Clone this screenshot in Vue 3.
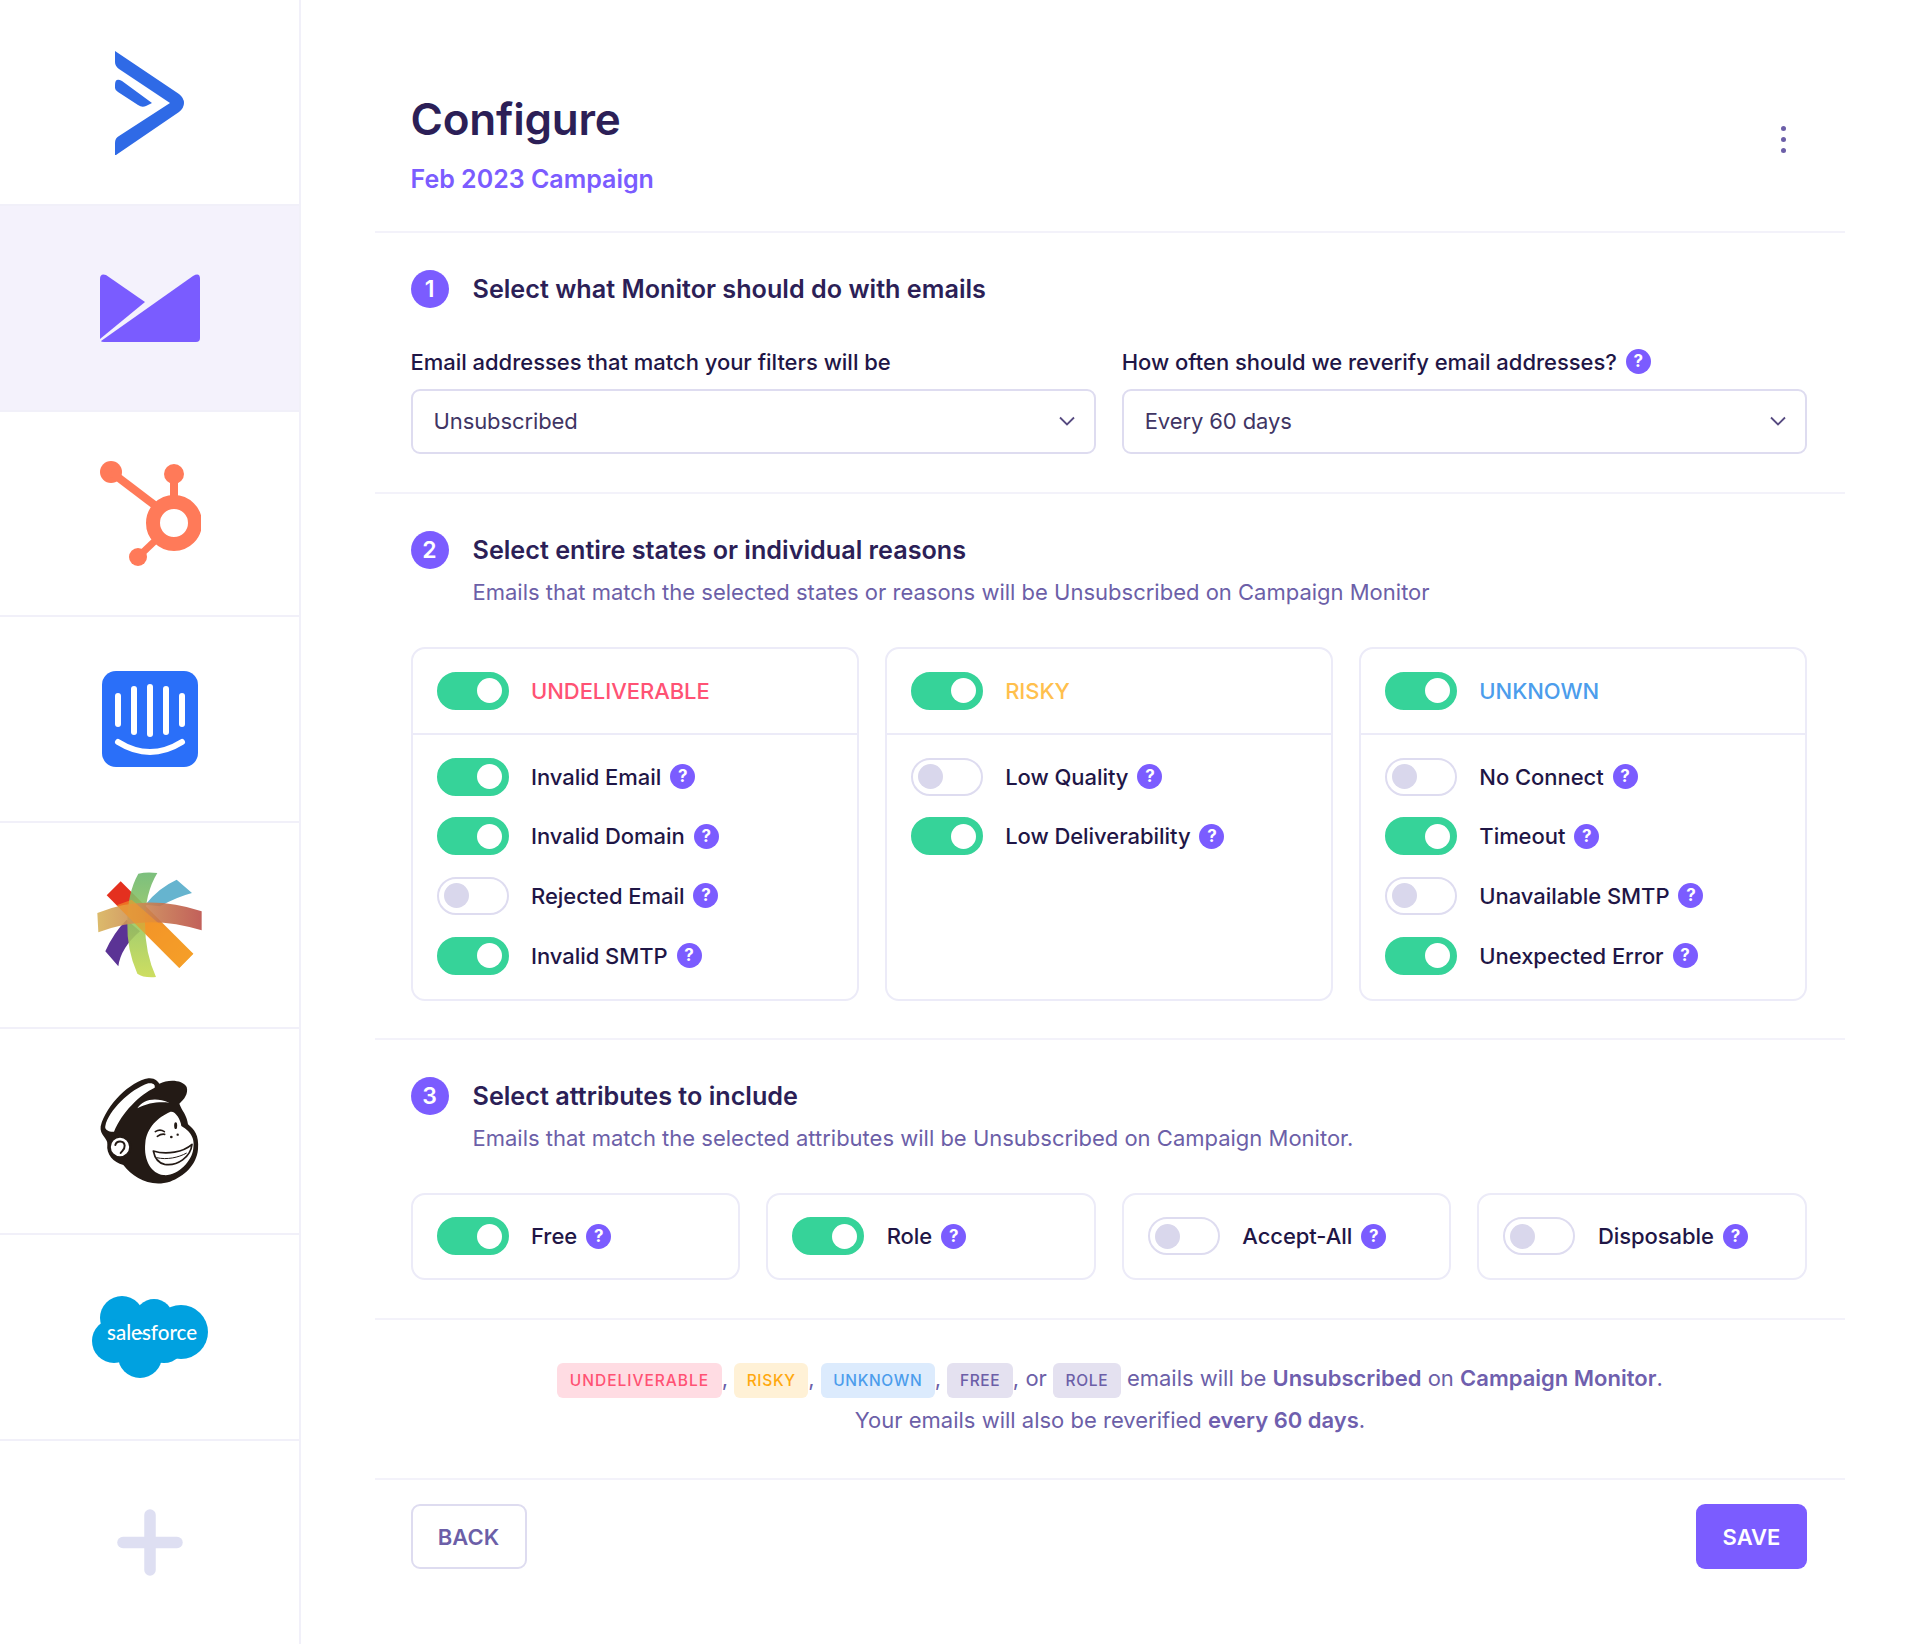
<script setup>
const groups = [
  { title: 'UNDELIVERABLE', cls: 'red', on: true, items: [
    { name: 'Invalid Email', on: true }, { name: 'Invalid Domain', on: true },
    { name: 'Rejected Email', on: false }, { name: 'Invalid SMTP', on: true } ] },
  { title: 'RISKY', cls: 'amber', on: true, items: [
    { name: 'Low Quality', on: false }, { name: 'Low Deliverability', on: true } ] },
  { title: 'UNKNOWN', cls: 'blue', on: true, items: [
    { name: 'No Connect', on: false }, { name: 'Timeout', on: true },
    { name: 'Unavailable SMTP', on: false }, { name: 'Unexpected Error', on: true } ] },
]
const attrs = [
  { name: 'Free', on: true }, { name: 'Role', on: true },
  { name: 'Accept-All', on: false }, { name: 'Disposable', on: false },
]
</script>

<template>
  <div class="app">
    <aside class="side">
      <div class="logo first">
        <svg width="70" height="104" viewBox="116 51 70 104">
          <path fill="#2f6ae6" d="M116 51 L180 94 Q185 98 185 103 Q185 108 180 112 L117 155 L116 155 L116 143 Q116 138 120 136 L171 103 L120 69 Q116 66 116 62Z"/>
          <path fill="#2f6ae6" d="M116 85 Q116 77 123 81 L153 103 L147 106 Q143 108 139 105 L119 92 Q116 90 116 88Z"/>
        </svg>
      </div>
      <div class="logo active">
        <svg width="100" height="68" viewBox="100 274 100 68">
          <path fill="#7a5cff" d="M100 279 Q100 273 106 275 L145 302 L100 339Z"/>
          <path fill="#7a5cff" d="M101 341 L193 276 Q200 272 200 279 V338 Q200 342 196 342 H104 Q101 342 101 341Z"/>
        </svg>
      </div>
      <div class="logo hub">
        <svg width="102" height="106" viewBox="98 461 102 106">
          <g fill="#ff7a59" stroke="#ff7a59">
            <circle cx="110" cy="472" r="11" stroke="none"/>
            <circle cx="173" cy="474" r="10" stroke="none"/>
            <circle cx="137" cy="557" r="9" stroke="none"/>
            <line x1="110" y1="472" x2="160" y2="510" stroke-width="8"/>
            <line x1="173" y1="474" x2="173" y2="505" stroke-width="8"/>
            <line x1="137" y1="557" x2="158" y2="537" stroke-width="7"/>
            <circle cx="173" cy="523" r="21" fill="none" stroke-width="14"/>
          </g>
        </svg>
      </div>
      <div class="logo">
        <svg width="96" height="96" viewBox="102 671 96 96">
          <rect x="102" y="671" width="96" height="96" rx="14" fill="#2a6ff9"/>
          <g stroke="#fff" stroke-width="6" stroke-linecap="round" fill="none">
            <line x1="118" y1="696" x2="118" y2="724"/>
            <line x1="134" y1="689" x2="134" y2="732"/>
            <line x1="150" y1="687" x2="150" y2="734"/>
            <line x1="166" y1="689" x2="166" y2="732"/>
            <line x1="182" y1="696" x2="182" y2="724"/>
            <path d="M118 742 Q150 762 182 742"/>
          </g>
        </svg>
      </div>
      <div class="logo">
        <svg width="140" height="140" viewBox="0 16 420 420">
          <defs>
            <linearGradient id="gGreen" x1="0" y1="0" x2="0" y2="1">
              <stop offset="0" stop-color="#6db86f"/><stop offset="1" stop-color="#c8da4f"/>
            </linearGradient>
            <linearGradient id="gTan" x1="0" y1="0" x2="1" y2="0">
              <stop offset="0" stop-color="#d8b35b"/><stop offset="1" stop-color="#bb4f48"/>
            </linearGradient>
            <linearGradient id="gDiag" x1="0" y1="0" x2="1" y2="1">
              <stop offset="0" stop-color="#e4301f"/><stop offset="0.24" stop-color="#e4301f"/><stop offset="0.38" stop-color="#f08a2a"/><stop offset="1" stop-color="#f5aa28"/>
            </linearGradient>
          </defs>
          <path fill="#5b3395" d="M140 210 Q100 250 76 305 L115 350 Q122 295 180 245Z"/>
          <path fill="#66b4cf" d="M196 165 Q235 115 290 90 L336 130 Q290 142 240 170Z"/>
          <path fill="url(#gDiag)" d="M122 95 L340 312 L298 355 L80 137Z"/>
          <path fill="url(#gGreen)" opacity="0.9" d="M175 72 Q200 66 232 70 Q195 130 195 220 Q195 310 228 382 Q190 385 172 372 Q140 300 142 220 Q142 130 175 72Z"/>
          <path fill="url(#gTan)" opacity="0.9" d="M52 190 Q200 130 365 185 L365 242 Q200 190 55 248Z"/>
          <path fill="#f59a28" opacity="0.6" d="M155 150 L340 312 L298 355 L110 167Z"/>
        </svg>
      </div>
      <div class="logo">
        <svg width="140" height="140" viewBox="0 0 420 420">
          <path fill="#231a15" d="M62 196 C80 130 150 62 205 52 C225 50 234 62 238 68 C265 54 308 56 320 78 C326 98 312 116 298 128 C306 150 320 160 324 190 C342 205 358 222 354 265 C350 312 312 347 270 362 C210 380 160 350 130 312 C100 305 78 280 82 250 C84 232 58 222 62 196Z"/>
          <path fill="#fff" d="M76 195 C85 150 150 85 205 67 C222 65 226 73 224 80 C180 100 125 155 102 212 C92 214 72 208 76 195Z"/>
          <path fill="#fff" d="M172 142 C190 115 225 108 268 125 C235 122 205 125 172 142Z"/>
          <circle cx="120" cy="258" r="31" fill="#fff" stroke="#231a15" stroke-width="7"/>
          <path fill="none" stroke="#231a15" stroke-width="6" stroke-linecap="round" d="M106 252 C110 238 132 238 134 254 C135 266 126 270 122 276"/>
          <path fill="#fff" d="M196 245 C200 200 235 168 270 153 C285 148 302 175 304 195 C322 205 347 225 340 262 C337 302 290 347 250 342 C215 337 190 300 196 245Z"/>
          <path fill="none" stroke="#231a15" stroke-width="5" stroke-linecap="round" d="M226 212 Q240 203 253 212 M232 226 Q244 218 254 220"/>
          <ellipse cx="287" cy="194" rx="4.5" ry="10" fill="#231a15"/>
          <circle cx="274" cy="228" r="4" fill="#231a15"/>
          <circle cx="293" cy="221" r="3.5" fill="#231a15"/>
          <path fill="#fff" stroke="#231a15" stroke-width="5" stroke-linejoin="round" d="M220 270 C260 283 310 273 336 250 C332 288 292 316 254 310 C234 306 224 290 220 270Z"/>
          <path fill="none" stroke="#231a15" stroke-width="3" d="M230 290 C260 297 295 290 320 276"/>
        </svg>
      </div>
      <div class="logo">
        <svg width="116" height="82" viewBox="0 0 116 82">
          <g fill="#00a1e0">
            <circle cx="30" cy="22" r="22"/><circle cx="62" cy="22" r="19"/>
            <circle cx="89" cy="36" r="27"/><circle cx="22" cy="45" r="22"/>
            <circle cx="48" cy="60" r="22"/><circle cx="72" cy="46" r="21"/>
          </g>
          <text x="60" y="44" text-anchor="middle" class="sf">salesforce</text>
        </svg>
      </div>
      <div class="logo last">
        <svg width="66" height="67" viewBox="0 0 66 67">
          <g stroke="#dedff2" stroke-width="11.5" stroke-linecap="round">
            <line x1="6" y1="33.5" x2="60" y2="33.5"/><line x1="33" y1="6" x2="33" y2="61"/>
          </g>
        </svg>
      </div>
    </aside>

    <main class="main">
      <header class="head">
        <div>
          <h1 class="title">Configure</h1>
          <div class="subtitle">Feb 2023 Campaign</div>
        </div>
        <div class="dots"><i></i><i></i><i></i></div>
      </header>

      <section class="sec sec1">
        <div class="sec-head">
          <span class="num">1</span>
          <div><h2 class="sec-title">Select what Monitor should do with emails</h2></div>
        </div>
        <div class="fields">
          <div>
            <div class="label">Email addresses that match your filters will be</div>
            <div class="select">
              <span>Unsubscribed</span>
              <svg width="16" height="10" viewBox="0 0 16 10"><path d="M1 1.5 L8 8.5 L15 1.5" fill="none" stroke="#564a80" stroke-width="1.8"/></svg>
            </div>
          </div>
          <div>
            <div class="label">How often should we reverify email addresses? <span class="help">?</span></div>
            <div class="select">
              <span>Every 60 days</span>
              <svg width="16" height="10" viewBox="0 0 16 10"><path d="M1 1.5 L8 8.5 L15 1.5" fill="none" stroke="#564a80" stroke-width="1.8"/></svg>
            </div>
          </div>
        </div>
      </section>

      <section class="sec sec2">
        <div class="sec-head">
          <span class="num">2</span>
          <div>
            <h2 class="sec-title">Select entire states or individual reasons</h2>
            <p class="sec-sub">Emails that match the selected states or reasons will be Unsubscribed on Campaign Monitor</p>
          </div>
        </div>
        <div class="groups">
          <div v-for="g in groups" :key="g.title" class="group">
            <div class="group-head">
              <span class="toggle on"><i></i></span>
              <span class="group-title" :class="g.cls">{{ g.title }}</span>
            </div>
            <div class="group-body">
              <div v-for="it in g.items" :key="it.name" class="row">
                <span class="toggle" :class="{ on: it.on }"><i></i></span>
                <span class="row-name">{{ it.name }}</span>
                <span class="help">?</span>
              </div>
            </div>
          </div>
        </div>
      </section>

      <section class="sec sec3">
        <div class="sec-head">
          <span class="num">3</span>
          <div>
            <h2 class="sec-title">Select attributes to include</h2>
            <p class="sec-sub">Emails that match the selected attributes will be Unsubscribed on Campaign Monitor.</p>
          </div>
        </div>
        <div class="attrs">
          <div v-for="a in attrs" :key="a.name" class="attr row">
            <span class="toggle" :class="{ on: a.on }"><i></i></span>
            <span class="row-name">{{ a.name }}</span>
            <span class="help">?</span>
          </div>
        </div>
      </section>

      <section class="summary">
        <div>
          <span class="tag t-red">UNDELIVERABLE</span>, <span class="tag t-amber">RISKY</span>, <span class="tag t-blue">UNKNOWN</span>, <span class="tag t-gray">FREE</span>, or <span class="tag t-gray">ROLE</span> emails will be <b>Unsubscribed</b> on <b>Campaign Monitor</b>.
        </div>
        <div>Your emails will also be reverified <b>every 60 days</b>.</div>
      </section>

      <footer class="foot">
        <button class="btn back">BACK</button>
        <button class="btn save">SAVE</button>
      </footer>
    </main>
  </div>
</template>

<style scoped>
.app {
  display: flex;
  min-height: 1644px;
  background: #fff;
  font-family: Inter, "Liberation Sans", sans-serif;
  color: #1f1646;
}
.side {
  width: 301px;
  flex: none;
  box-sizing: border-box;
  border-right: 2px solid #f1f0f9;
  display: flex;
  flex-direction: column;
}
.logo {
  height: 205.8px;
  flex: none;
  box-sizing: border-box;
  border-bottom: 2px solid #f1f0f9;
  display: flex;
  align-items: center;
  justify-content: center;
}
.logo.first { padding-top: 2px; }
.logo.hub { padding-top: 2px; }
.logo.active { background: #f4f2fc; }
.logo.last { border-bottom: 0; flex: 1; }
.logo svg { display: block; }
.sf { font: 500 20.5px Lato, Inter, sans-serif; fill: #fff; }

.main {
  flex: 1;
  min-width: 0;
  padding: 0 75px 0 74px;
}
.head {
  height: 233px;
  box-sizing: border-box;
  border-bottom: 2px solid #f3f2fa;
  padding: 90px 38px 0 35.5px;
  display: flex;
  justify-content: space-between;
  align-items: flex-start;
}
.title {
  margin: 0;
  font-size: 44px;
  line-height: 58px;
  font-weight: 600;
  color: #2c1f57;
  letter-spacing: -0.2px;
}
.subtitle {
  margin-top: 16px;
  font-size: 25px;
  line-height: 30px;
  font-weight: 600;
  color: #7b5cff;
}
.dots {
  margin: 36px 21px 0 0;
  display: flex;
  flex-direction: column;
  gap: 6px;
}
.dots i {
  display: block;
  width: 5px;
  height: 5px;
  border-radius: 50%;
  background: #6c5fa8;
}
.sec {
  padding: 37px 38px 38px 35.5px;
  border-bottom: 2px solid #f3f2fa;
}
.sec2 { padding-bottom: 37px; }
.sec3 { padding-bottom: 38.5px; }
.sec-head {
  display: flex;
  gap: 24px;
  align-items: flex-start;
}
.num {
  width: 38px;
  height: 38px;
  flex: none;
  border-radius: 50%;
  background: #7b5cff;
  color: #fff;
  font-size: 23px;
  font-weight: 600;
  display: flex;
  align-items: center;
  justify-content: center;
}
.sec-title {
  margin: 0;
  font-size: 25.2px;
  line-height: 38px;
  font-weight: 600;
  color: #2c1f57;
}
.sec-sub {
  margin: 9px 0 0;
  font-size: 22px;
  line-height: 28px;
  color: #6c5fa8;
}
.fields {
  margin-top: 39.5px;
  display: grid;
  grid-template-columns: 1fr 1fr;
  gap: 26px;
}
.label {
  font-size: 22px;
  line-height: 28px;
  font-weight: 500;
  letter-spacing: -0.03px;
  color: #1f1646;
  display: flex;
  align-items: center;
  gap: 9px;
}
.select {
  margin-top: 13px;
  height: 65px;
  box-sizing: border-box;
  border: 2px solid #dedcf0;
  border-radius: 9px;
  padding: 0 19px 0 21px;
  display: flex;
  align-items: center;
  justify-content: space-between;
  font-size: 22px;
  letter-spacing: -0.1px;
  color: #3f3564;
}
.help {
  width: 25px;
  height: 25px;
  flex: none;
  border-radius: 50%;
  background: #7b5cff;
  color: #fff;
  font-size: 17px;
  font-weight: 700;
  line-height: 1;
  letter-spacing: 0;
  display: inline-flex;
  align-items: center;
  justify-content: center;
}
.groups {
  margin-top: 41px;
  display: grid;
  grid-template-columns: repeat(3, 1fr);
  gap: 26px;
}
.group, .attr {
  border: 2px solid #ecebf8;
  border-radius: 14px;
  box-sizing: border-box;
}
.group { height: 354px; }
.group-head {
  height: 86px;
  box-sizing: border-box;
  padding: 0 24px;
  border-bottom: 2px solid #ecebf8;
  display: flex;
  align-items: center;
  gap: 22.5px;
}
.group-title { font-size: 22px; font-weight: 500; letter-spacing: -0.05px; }
.red { color: #ff5274; }
.amber { color: #ffc04d; }
.blue { color: #4c9dec; }
.group-body {
  padding: 23px 24px 0;
  display: flex;
  flex-direction: column;
  gap: 21.7px;
}
.row {
  display: flex;
  align-items: center;
}
.row-name {
  margin-left: 22.5px;
  margin-right: 9px;
  font-size: 22px;
  font-weight: 500;
  letter-spacing: -0.05px;
  color: #1f1646;
}
.toggle {
  width: 72px;
  height: 38px;
  flex: none;
  box-sizing: border-box;
  border: 2px solid #dedcf0;
  border-radius: 19px;
  padding: 0 5px;
  display: flex;
  align-items: center;
  background: #fff;
}
.toggle i {
  display: block;
  width: 25px;
  height: 25px;
  border-radius: 50%;
  background: #d9d7ec;
}
.toggle.on {
  background: #36d399;
  border-color: #36d399;
  justify-content: flex-end;
}
.toggle.on i { background: #fff; }
.attrs {
  margin-top: 41px;
  display: grid;
  grid-template-columns: repeat(4, 1fr);
  gap: 26px;
}
.attr {
  height: 87px;
  padding: 0 24px;
}
.summary {
  padding: 37px 0 39px;
  border-bottom: 2px solid #f3f2fa;
  text-align: center;
  font-size: 22px;
  line-height: 42px;
  color: #6c5fa8;
  height: 160px;
  box-sizing: border-box;
}
.summary b { font-weight: 600; color: #6f5fae; }
.tag {
  display: inline-block;
  height: 35px;
  line-height: 35px;
  padding: 0 12.5px;
  border-radius: 6px;
  font-size: 15.5px;
  font-weight: 500;
  letter-spacing: 0.65px;
  vertical-align: middle;
}
.t-red { background: #ffdce3; color: #ff5274; letter-spacing: 1px; }
.t-amber { background: #fff1d6; color: #ffa90f; }
.t-blue { background: #dcebfd; color: #4c9dec; }
.t-gray { background: #e4e1f0; color: #6c5fa8; }
.foot {
  padding: 24px 38px 0 35.5px;
  display: flex;
  justify-content: space-between;
}
.btn {
  height: 65px;
  box-sizing: border-box;
  border-radius: 9px;
  font-family: inherit;
  font-size: 22px;
  font-weight: 600;
}
.back {
  width: 116px;
  background: #fff;
  border: 2px solid #dedcf0;
  color: #6c5fa8;
}
.save {
  width: 111px;
  background: #7b5cff;
  border: 0;
  color: #fff;
}
</style>
